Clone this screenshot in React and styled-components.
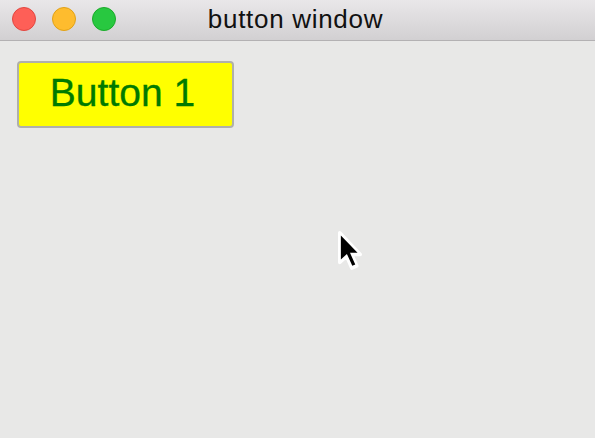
import React from "react";
import styled, { createGlobalStyle } from "styled-components";

const Global = createGlobalStyle`
  html, body { margin: 0; padding: 0; background: #e8e8e7; }
  body { font-family: "Liberation Sans", Arial, sans-serif; }
`;

const Window = styled.div`
  width: 595px;
  height: 438px;
  display: flex;
  flex-direction: column;
  background: #e8e8e7;
  position: relative;
  overflow: hidden;
`;

const TitleBar = styled.div`
  flex: none;
  display: grid;
  grid-template-columns: 1fr auto 1fr;
  align-items: center;
  background: linear-gradient(#e9e7e9, #d2d0d2);
  border-bottom: 1px solid #b3b1b3;
  box-sizing: border-box;
  height: 41px;
`;

const Lights = styled.div`
  display: flex;
  gap: 16px;
  padding-left: 12px;
  padding-bottom: 2px;
`;

const Light = styled.span`
  width: 24px;
  height: 24px;
  border-radius: 50%;
  box-sizing: border-box;
  background: ${(p) => p.$fill};
  border: 1px solid ${(p) => p.$edge};
`;

const Title = styled.div`
  font-size: 26px;
  letter-spacing: 0.7px;
  color: #111;
  padding: 0 4px 2px 0;
`;

const Content = styled.div`
  flex: 1;
  padding: 20px 17px;
`;

const YellowButton = styled.button`
  width: 217px;
  height: 67px;
  background: #ffff00;
  border: 2px solid #b0b0ab;
  border-radius: 4px;
  color: #007a00;
  font-family: "Liberation Sans", Arial, sans-serif;
  font-size: 39px;
  -webkit-text-stroke: 0.3px #007a00;
  padding: 0 6px 3px 0;
  display: flex;
  align-items: center;
  justify-content: center;
  box-sizing: border-box;
  cursor: default;
`;

const Cursor = styled.svg`
  position: absolute;
  left: 334px;
  top: 228px;
`;

export default function App() {
  return (
    <>
      <Global />
      <Window>
        <TitleBar>
          <Lights>
            <Light $fill="#fe5f57" $edge="#e2463f" />
            <Light $fill="#febc2e" $edge="#e1a116" />
            <Light $fill="#28c840" $edge="#1aab29" />
          </Lights>
          <Title>button window</Title>
          <div />
        </TitleBar>
        <Content>
          <YellowButton>Button 1</YellowButton>
        </Content>
        <Cursor width="32" height="46" viewBox="0 0 28 40">
          <path
            d="M5 4 L5 30 L11 24.5 L15.5 35 L20 33 L15.5 23 L23 23 Z"
            fill="#fff"
            stroke="#fff"
            strokeWidth="3"
            strokeLinejoin="round"
          />
          <path d="M6 6.5 L6 27.5 L11.3 22.6 L16 33 L18.6 31.8 L14 21.6 L20.6 21.6 Z" fill="#000" />
        </Cursor>
      </Window>
    </>
  );
}
